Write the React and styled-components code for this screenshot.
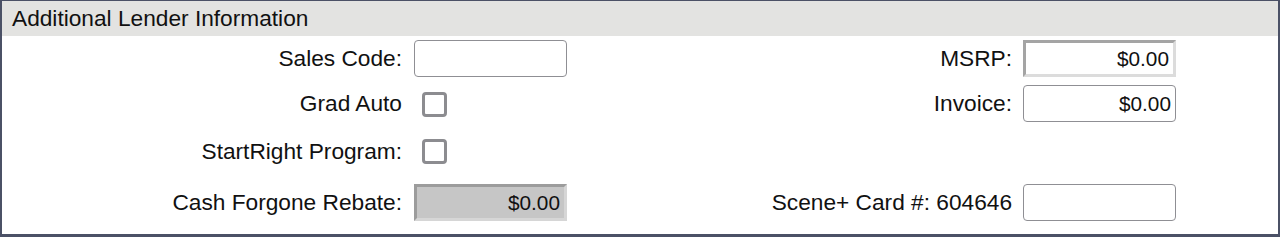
import styled, { createGlobalStyle } from 'styled-components';

const GlobalStyle = createGlobalStyle`
  html, body {
    margin: 0;
    padding: 0;
    background: #ffffff;
  }
  body {
    font-family: "Liberation Sans", Arial, Helvetica, sans-serif;
    color: #111;
  }
`;

function Checkbox() {
  return <Check type="checkbox" />;
}

function App() {
  return (
    <>
      <GlobalStyle />
      <Panel>
        <Header>Additional Lender Information</Header>
        <Grid>
          <Label>Sales Code:</Label>
          <Cell><TextInput /></Cell>
          <Label>MSRP:</Label>
          <Cell><TextInput variant="inset" defaultValue="$0.00" readOnly /></Cell>
          <span />

          <Label>Grad Auto</Label>
          <Cell><Checkbox /></Cell>
          <Label>Invoice:</Label>
          <Cell><TextInput defaultValue="$0.00" /></Cell>
          <span />

          <Label>StartRight Program:</Label>
          <Cell><Checkbox /></Cell>
          <span />
          <span />
          <span />

          <Label>Cash Forgone Rebate:</Label>
          <Cell><TextInput variant="disabled" defaultValue="$0.00" readOnly /></Cell>
          <Label>Scene+ Card #: 604646</Label>
          <Cell><TextInput /></Cell>
          <span />
        </Grid>
      </Panel>
    </>
  );
}

export default App;

const Panel = styled.div`
  box-sizing: border-box;
  width: 1280px;
  height: 237px;
  border: 2px solid #4b5166;
  border-top-width: 1px;
  border-bottom-width: 3px;
  background: #fff;
`;

const Header = styled.div`
  height: 35px;
  line-height: 34px;
  padding-left: 10px;
  background: #e3e3e1;
  font-size: 22.7px;
  color: #111;
`;

const Grid = styled.div`
  display: grid;
  grid-template-columns: 412px 153px 456px 153px 1fr;
  grid-template-rows: 45px 45px 50px 53px;
`;

const Label = styled.div`
  display: flex;
  align-items: center;
  justify-content: flex-end;
  padding-right: 12px;
  font-size: 22.7px;
  color: #111;
  white-space: nowrap;
  &:nth-child(5n + 3) {
    padding-right: 11px;
  }
`;

const Cell = styled.div`
  display: flex;
  align-items: center;
`;

const TextInput = styled.input`
  box-sizing: border-box;
  width: 153px;
  height: 37px;
  margin: 0;
  padding: 0 4px 0 6px;
  text-align: right;
  font-family: "Liberation Sans", Arial, Helvetica, sans-serif;
  font-size: 20.8px;
  color: #111;
  outline: none;
  background: ${({ variant }) => (variant === 'disabled' ? '#c6c6c6' : '#fff')};
  border-radius: ${({ variant }) => (variant ? '0' : '4px')};
  border: ${({ variant }) => (variant ? '3px solid' : '1.5px solid #8f8f94')};
  border-color: ${({ variant }) =>
    variant === 'disabled'
      ? '#9c9c9c #d6d6d6 #d6d6d6 #9c9c9c'
      : variant === 'inset'
      ? '#a4a4a4 #dcdcdc #dcdcdc #a4a4a4'
      : '#8f8f94'};
`;

const Check = styled.input`
  appearance: none;
  box-sizing: border-box;
  width: 25px;
  height: 25px;
  margin: 1px 0 0 8px;
  border: 3px solid #8c8c90;
  border-radius: 4px;
  background: #fff;
`;
